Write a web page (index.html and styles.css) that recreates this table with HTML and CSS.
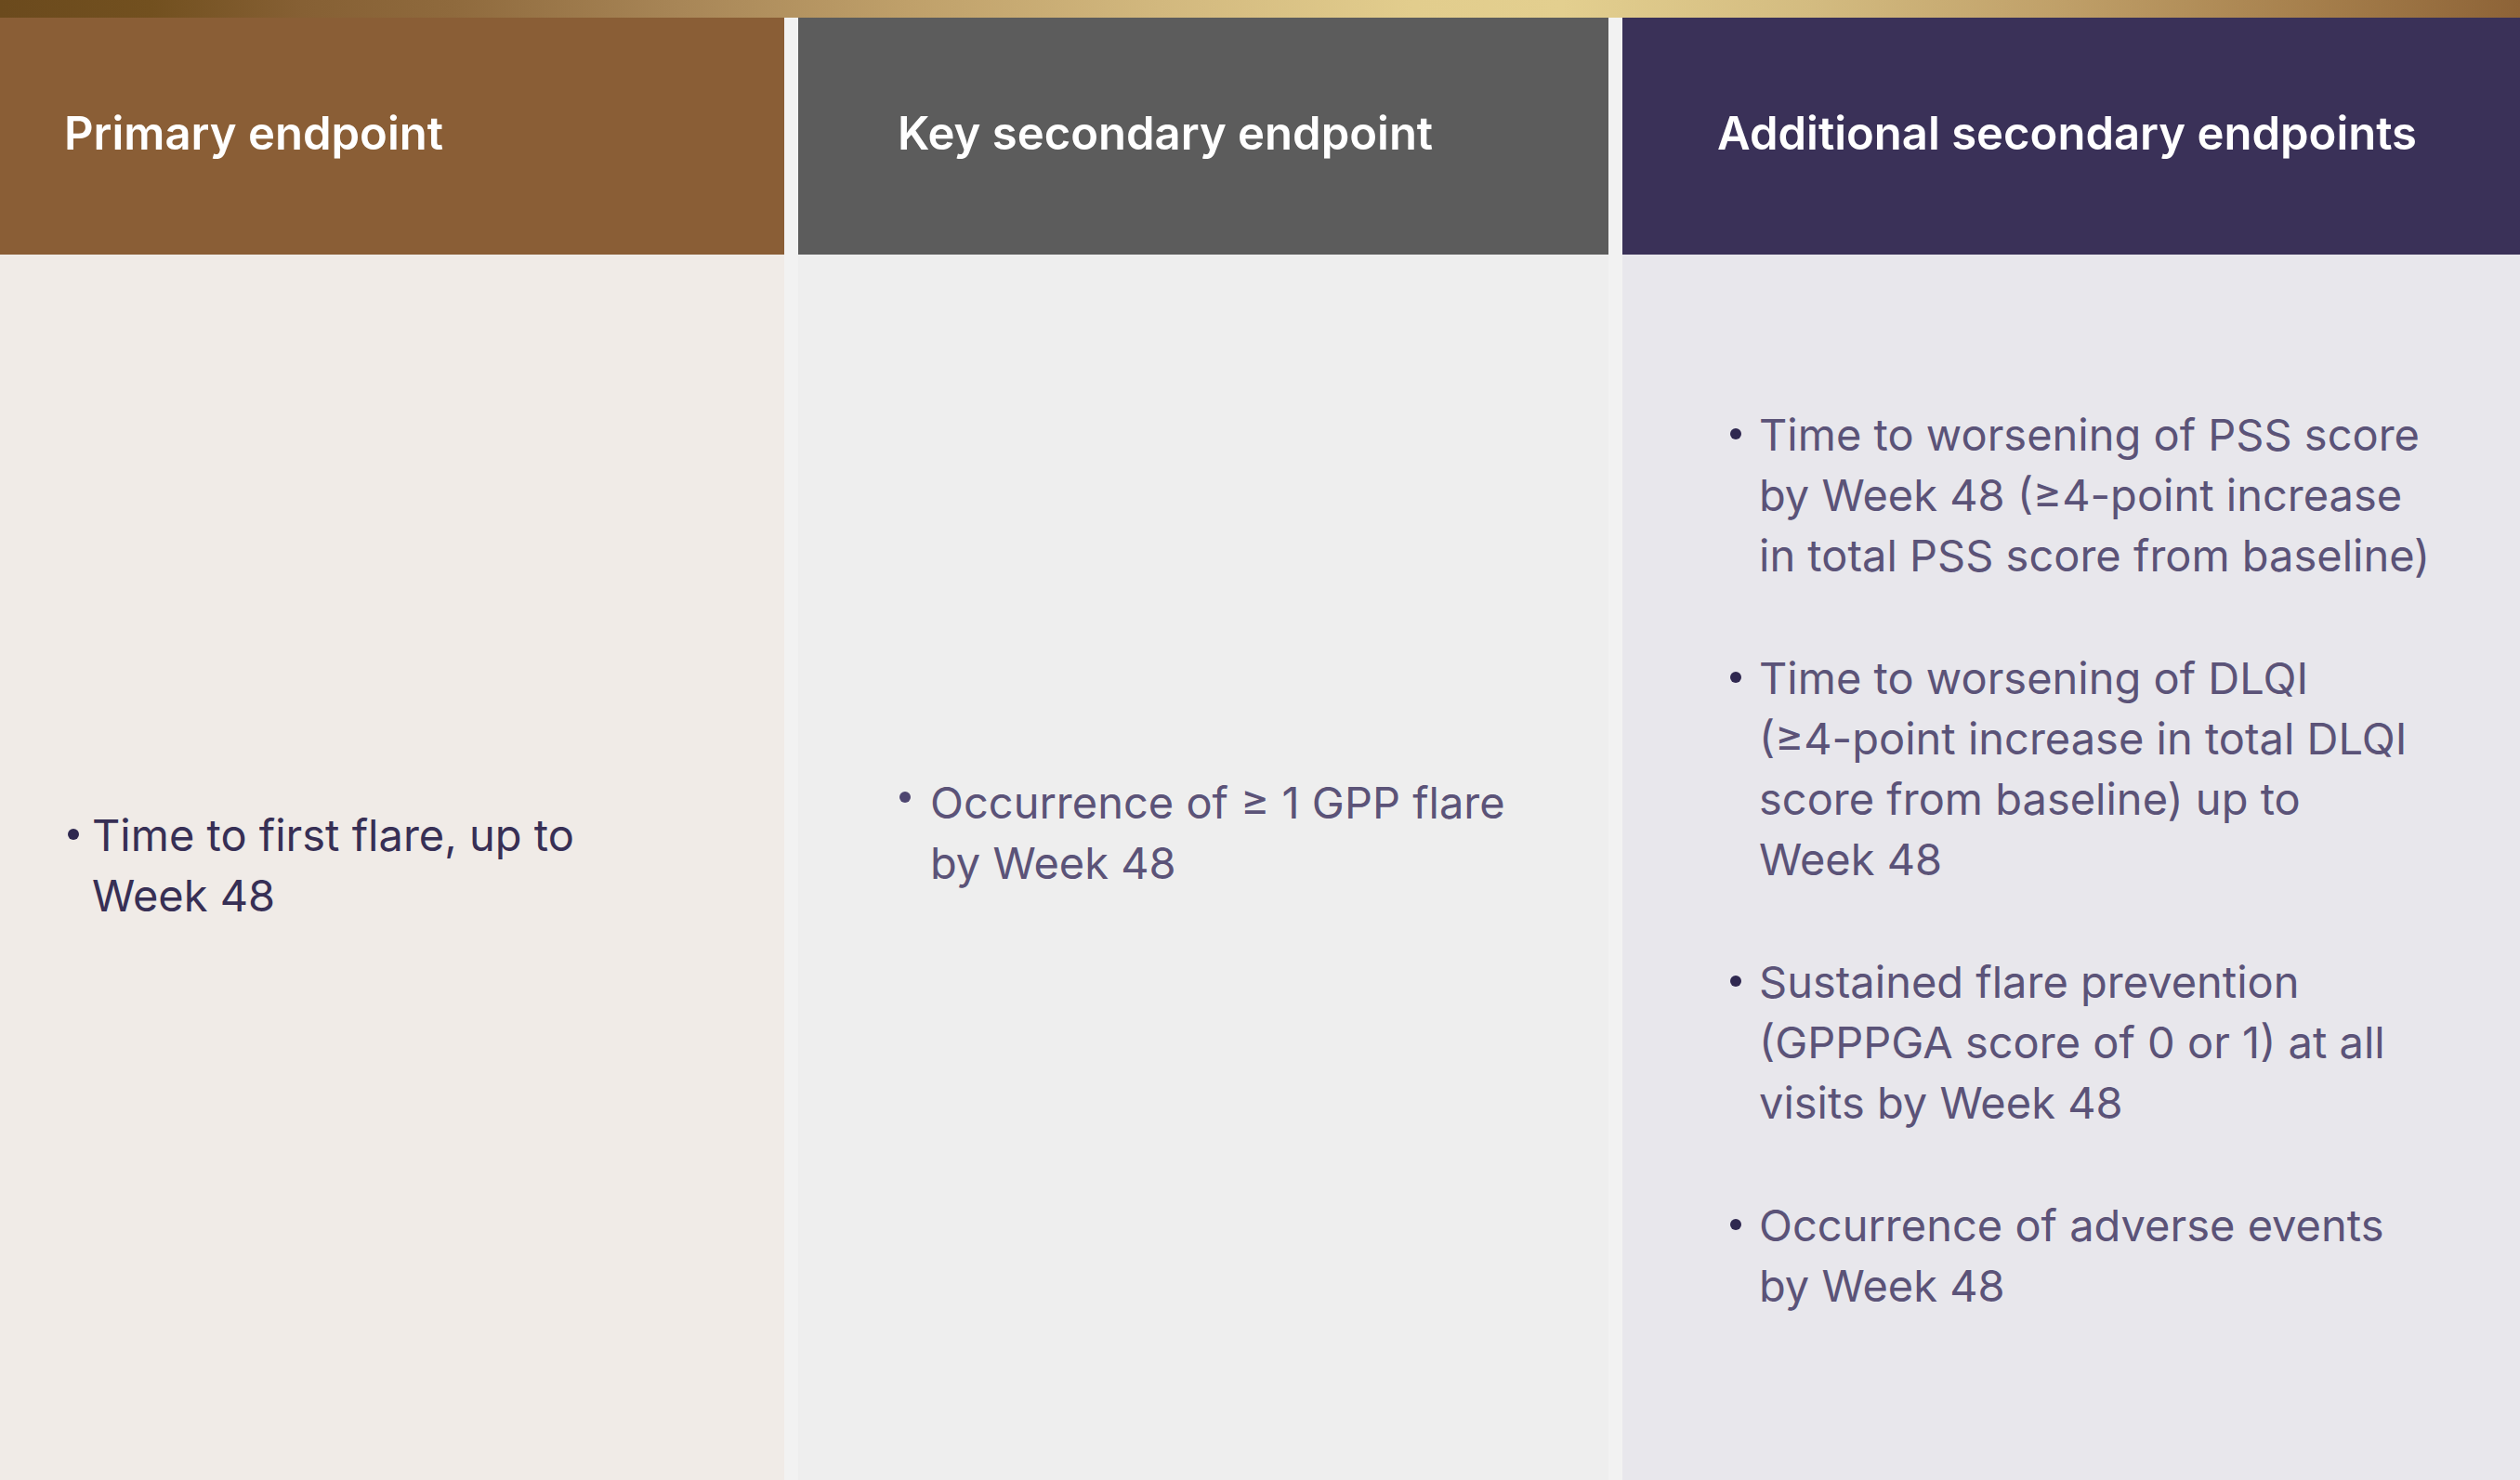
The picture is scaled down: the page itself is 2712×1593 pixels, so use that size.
FILE: index.html
```html
<!DOCTYPE html>
<html lang="en">
<head>
<meta charset="utf-8">
<title>Endpoints</title>
<link rel="stylesheet" href="styles.css">
</head>
<body>
<main class="endpoints">
  <div class="gold-bar"></div>
  <div class="grid">
    <section class="col col-primary">
      <h2 class="col-head">Primary endpoint</h2>
      <div class="col-body">
        <ul class="points">
          <li>Time to first flare, up to<br>Week 48</li>
        </ul>
      </div>
    </section>
    <section class="col col-key">
      <h2 class="col-head">Key secondary endpoint</h2>
      <div class="col-body">
        <ul class="points">
          <li>Occurrence of ≥ 1 GPP flare<br>by Week 48</li>
        </ul>
      </div>
    </section>
    <section class="col col-additional">
      <h2 class="col-head">Additional secondary endpoints</h2>
      <div class="col-body">
        <ul class="points">
          <li>Time to worsening of PSS score<br>by Week 48 (≥4-point increase<br>in total PSS score from baseline)</li>
          <li>Time to worsening of DLQI<br>(≥4-point increase in total DLQI<br>score from baseline) up to<br>Week 48</li>
          <li>Sustained flare prevention<br>(GPPPGA score of 0 or 1) at all<br>visits by Week 48</li>
          <li>Occurrence of adverse events<br>by Week 48</li>
        </ul>
      </div>
    </section>
  </div>
</main>
</body>
</html>
```
FILE: styles.css
```css
html, body {
  margin: 0;
  padding: 0;
}
body {
  background: #f2f2f2;
  font-family: "Inter", "Roboto", sans-serif;
  height: 100vh;
  overflow: hidden;
}
.endpoints {
  display: flex;
  flex-direction: column;
  height: 100vh;
}
.gold-bar {
  height: 19px;
  flex: none;
  background: linear-gradient(90deg,
    #6b4a1d 0%, #72501f 6%, #866034 12%, #8f6a3d 18%, #a88657 27%,
    #bfa06a 36%, #d2b87e 46%, #e2cd8d 56%, #e3cf8f 62%, #d3bb80 72%,
    #bf9f68 82%, #a57e4b 92%, #8d6337 100%);
}
.grid {
  flex: 1;
  display: grid;
  grid-template-columns: 844px 872px 1fr;
  column-gap: 15px;
}
.col {
  display: grid;
  grid-template-rows: 255px 1fr;
  --head-bg: #8a5e36;
  --body-bg: #f0ebe7;
  --text: #372f55;
  --dot: #2f2850;
  --head-pad: 69px;
  --body-top: 592px;
  --dot-left: 73px;
  --dot-gap: 14px;
  --dot-shift: 0px;
}
.col-key {
  --head-bg: #5c5c5c;
  --body-bg: #eeeeee;
  --text: #5b5378;
  --dot: #4d4570;
  --head-pad: 107px;
  --body-top: 557px;
  --dot-left: 109px;
  --dot-gap: 21px;
  --dot-shift: -5px;
}
.col-additional {
  --head-bg: #3a3158;
  --body-bg: #e8e7ec;
  --text: #5b5378;
  --dot: #2f2850;
  --head-pad: 102px;
  --body-top: 161px;
  --dot-left: 116px;
  --dot-gap: 19px;
}
.col-head {
  margin: 0;
  display: flex;
  align-items: center;
  padding: 0 0 4px var(--head-pad);
  background: var(--head-bg);
  color: #ffffff;
  font-size: 49px;
  font-weight: 600;
  line-height: 1.2;
  letter-spacing: 0;
}
.col-body {
  background: var(--body-bg);
  padding-top: var(--body-top);
}
.points {
  list-style: none;
  margin: 0;
  padding: 0 0 0 var(--dot-left);
  display: flex;
  flex-direction: column;
  gap: 67px;
}
.points li {
  display: flex;
  align-items: flex-start;
  gap: var(--dot-gap);
  color: var(--text);
  font-size: 47px;
  font-weight: 400;
  line-height: 65px;
  white-space: nowrap;
}
.points li::before {
  content: "";
  flex: none;
  width: 12px;
  height: 12px;
  margin-top: calc(26px + var(--dot-shift));
  border-radius: 50%;
  background: var(--dot);
}
```
